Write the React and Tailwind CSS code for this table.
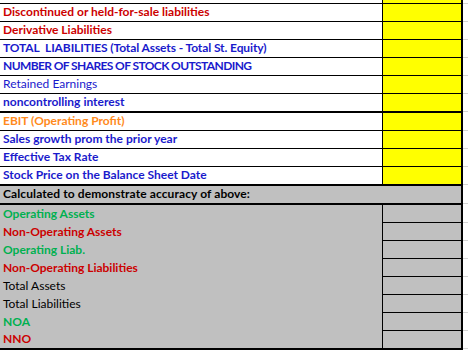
import React from "react";

const RED = "text-[#cc0000]";
const BLUE = "text-[#1a1acc]";
const ORANGE = "text-[#ff8a1c]";
const GREEN = "text-[#00b050]";
const BLACK = "text-black";

function Row({ h, b = 1, text, color, bold = true, right = "bg-[#ffff00]", leftBg = "bg-white", leftLine = true, merged = false, track = "" }) {
  const bb = b === 2 ? "border-b-2" : "border-b";
  const label = (
    <span className={`${color} ${bold ? "font-bold" : "font-normal"} ${track} text-[12px] leading-[14px] whitespace-pre`}>{text}</span>
  );
  return (
    <div className="flex" style={{ height: h + b }}>
      {merged ? (
        <div className={`w-[461px] ${leftBg} ${bb} border-black flex items-end pl-[3px] pb-[2px]`}>{label}</div>
      ) : (
        <>
          <div className={`w-[382px] ${leftBg} ${leftLine ? `${bb} border-black` : ""} flex items-end pl-[3px] pb-[2px]`}>
            {text && label}
          </div>
          <div className={`w-[79px] border-l border-black ${right} ${bb}`} />
        </>
      )}
      <div className="w-[2px] bg-black" />
      <div className="flex-1 bg-white border-b border-[#d4d4d4]" style={{ height: h + 1 }} />
    </div>
  );
}

export default function App() {
  const g = { leftBg: "bg-[#c0c0c0]", leftLine: false, right: "bg-[#c0c0c0]" };
  return (
    <div className="w-[468px] h-[350px] bg-white overflow-hidden" style={{ fontFamily: "Lato, 'Open Sans', sans-serif" }}>
      <Row h={3} text="" />
      <Row h={17} text="Discontinued or held-for-sale liabilities" color={RED} />
      <Row h={17} text="Derivative Liabilities" color={RED} />
      <Row h={17} text="TOTAL  LIABILITIES (Total Assets - Total St. Equity)" color={BLUE} track="tracking-[-0.1px]" />
      <Row h={17} text="NUMBER OF SHARES OF STOCK OUTSTANDING" color={BLUE} track="tracking-[-0.6px]" />
      <Row h={17} text="Retained Earnings" color={BLUE} bold={false} />
      <Row h={17} b={2} text="noncontrolling interest" color={BLUE} />
      <Row h={17} text="EBIT (Operating Profit)" color={ORANGE} />
      <Row h={17} text="Sales growth prom the prior year" color={BLUE} />
      <Row h={17} text="Effective Tax Rate" color={BLUE} />
      <Row h={17} b={2} text="Stock Price on the Balance Sheet Date" color={BLUE} />
      <Row h={17} b={2} merged leftBg="bg-[#c0c0c0]" text="Calculated to demonstrate accuracy of above:" color={BLACK} track="tracking-[0.1px]" />
      <Row h={17} {...g} text="Operating Assets" color={GREEN} />
      <Row h={17} {...g} text="Non-Operating Assets" color={RED} />
      <Row h={17} {...g} text="Operating Liab." color={GREEN} />
      <Row h={17} {...g} text="Non-Operating Liabilities" color={RED} />
      <Row h={17} {...g} text="Total Assets" color={BLACK} bold={false} />
      <Row h={17} {...g} text="Total Liabilities" color={BLACK} bold={false} />
      <Row h={17} {...g} text="NOA" color={GREEN} />
      <Row h={17} b={2} {...g} leftLine={true} text="NNO" color={RED} />
    </div>
  );
}
